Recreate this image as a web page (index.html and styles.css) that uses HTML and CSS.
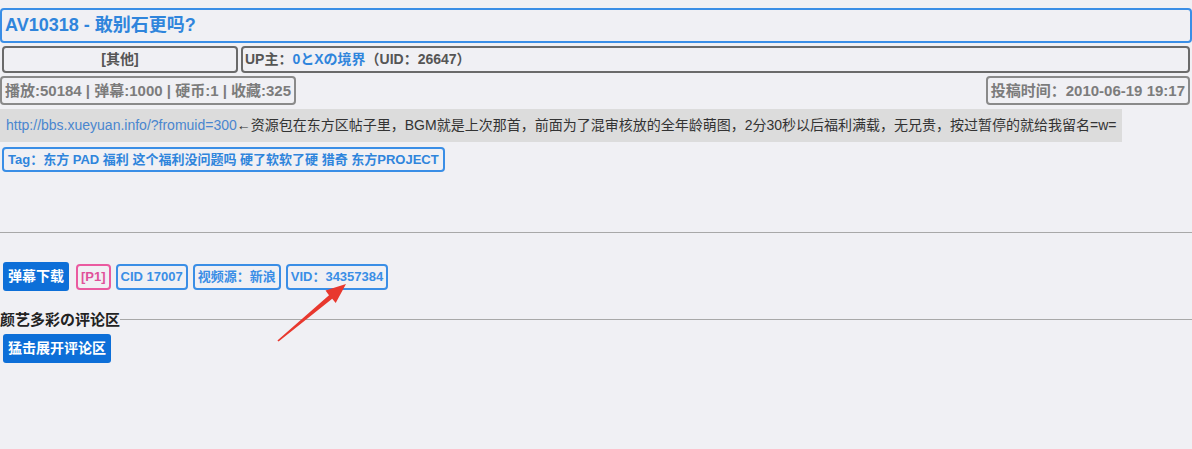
FILE: index.html
```html
<!DOCTYPE html>
<html lang="zh-CN">
<head>
<meta charset="utf-8">
<title>AV10318 - 敢别石更吗?</title>
<link rel="stylesheet" href="styles.css">
</head>
<body>
<div class="page">
  <h1 class="title">AV10318 - 敢别石更吗?</h1>
  <div class="info-row">
    <div class="box cat">[其他]</div>
    <div class="box up">UP主：<a class="up-name" href="#">0とXの境界</a>（UID：26647）</div>
  </div>
  <div class="stats-row">
    <span class="stat">播放:50184 | 弹幕:1000 | 硬币:1 | 收藏:325</span>
    <span class="stat">投稿时间：2010-06-19 19:17</span>
  </div>
  <div class="desc"><span class="desc-text"><a class="desc-link" href="#">http://bbs.xueyuan.info/?fromuid=300</a>←资源包在东方区帖子里，BGM就是上次那首，前面为了混审核放的全年龄萌图，2分30秒以后福利满载，无兄贵，按过暂停的就给我留名=w=</span></div>
  <div class="tags"><span class="tag">Tag：东方 PAD 福利 这个福利没问题吗 硬了软软了硬 猎奇 东方PROJECT</span></div>
  <hr class="divider">
  <div class="actions">
    <button class="btn">弹幕下载</button>
    <span class="badge pink">[P1]</span>
    <span class="badge">CID 17007</span>
    <span class="badge">视频源：新浪</span>
    <span class="badge">VID：34357384</span>
  </div>
  <div class="comment-head">
    <h3 class="comment-title">颜艺多彩の评论区</h3>
    <span class="comment-line"></span>
  </div>
  <button class="btn expand">猛击展开评论区</button>
  <svg class="arrow" width="85" height="70" viewBox="0 0 85 70">
    <polygon fill="#e8382e" points="76,4 65.7,23 62.2,18.7 8.6,61.6 7.4,60.4 59,15.2 55.5,10.6"/>
  </svg>
</div>
</body>
</html>
```
FILE: styles.css
```css
html, body {
  margin: 0;
  padding: 0;
  background: #f0f0f4;
}
body {
  font-family: "Liberation Sans", "Noto Sans CJK SC", sans-serif;
  color: #333;
}
.page {
  position: relative;
  padding-top: 8px;
  height: 441px;
}
.title {
  margin: 0;
  height: 35px;
  box-sizing: border-box;
  border: 2px solid #3a8ee6;
  border-radius: 4px;
  padding: 0 3px;
  font-size: 18px;
  line-height: 31px;
  font-weight: bold;
  color: #2f85dc;
}
.info-row {
  display: grid;
  grid-template-columns: 236px 1fr;
  gap: 3px;
  margin: 3px 2px 0 2px;
}
.box {
  height: 27px;
  box-sizing: border-box;
  border: 2px solid #6a6a6a;
  border-radius: 4px;
  font-size: 14px;
  font-weight: bold;
  line-height: 23px;
  color: #555;
}
.cat {
  text-align: center;
}
.up {
  padding: 0 2px;
}
.up-name {
  color: #2f85dc;
  text-decoration: none;
}
.stats-row {
  display: flex;
  justify-content: space-between;
  margin: 3px 2px 0 0;
}
.stat {
  height: 29px;
  box-sizing: border-box;
  border: 2px solid #8a8a8a;
  border-radius: 4px;
  padding: 0 3px;
  font-size: 15px;
  font-weight: bold;
  line-height: 25px;
  color: #7c7c7c;
}
.desc {
  margin-top: 4px;
}
.desc-text {
  display: inline-block;
  background: #dcdcdc;
  padding: 7px 5px 7px 6px;
  font-size: 14px;
  line-height: 19px;
  color: #333;
}
.desc-link {
  color: #4a86cf;
  text-decoration: none;
}
.tags {
  margin: 5px 0 0 2px;
}
.tag {
  display: inline-block;
  border: 2px solid #3a8ee6;
  border-radius: 4px;
  padding: 0 4px;
  font-size: 13px;
  font-weight: bold;
  line-height: 21px;
  color: #2f85dc;
}
.divider {
  margin: 60px 0 0 0;
  border: 0;
  border-top: 1px solid #a8a8a8;
  height: 0;
}
.actions {
  display: flex;
  align-items: center;
  gap: 5px;
  margin-top: 29px;
  padding-left: 3px;
}
.btn {
  display: inline-block;
  height: 29px;
  border: 0;
  border-radius: 3px;
  padding: 0 5px;
  background: #0d6fd8;
  color: #fff;
  font-family: "Liberation Sans", "Noto Sans CJK SC", sans-serif;
  font-size: 14px;
  font-weight: bold;
  line-height: 29px;
}
.badge {
  display: inline-block;
  height: 26px;
  box-sizing: border-box;
  border: 2px solid #3a8ee6;
  border-radius: 4px;
  padding: 0 3px;
  font-size: 13px;
  font-weight: bold;
  line-height: 22px;
  color: #3a8ee6;
}
.badge.pink {
  border-color: #ea5aa0;
  color: #e0509a;
  margin-left: 2px;
}
.comment-head {
  display: flex;
  align-items: center;
  margin-top: 19px;
}
.comment-title {
  margin: 0;
  font-family: "Liberation Serif", "Noto Sans CJK SC", serif;
  font-size: 15px;
  font-weight: bold;
  line-height: 20px;
  color: #222;
}
.comment-line {
  flex: 1;
  border-top: 1px solid #a8a8a8;
  margin-top: -2px;
}
.expand {
  margin: 4px 0 0 3px;
}
.arrow {
  position: absolute;
  left: 270px;
  top: 280px;
}
```
